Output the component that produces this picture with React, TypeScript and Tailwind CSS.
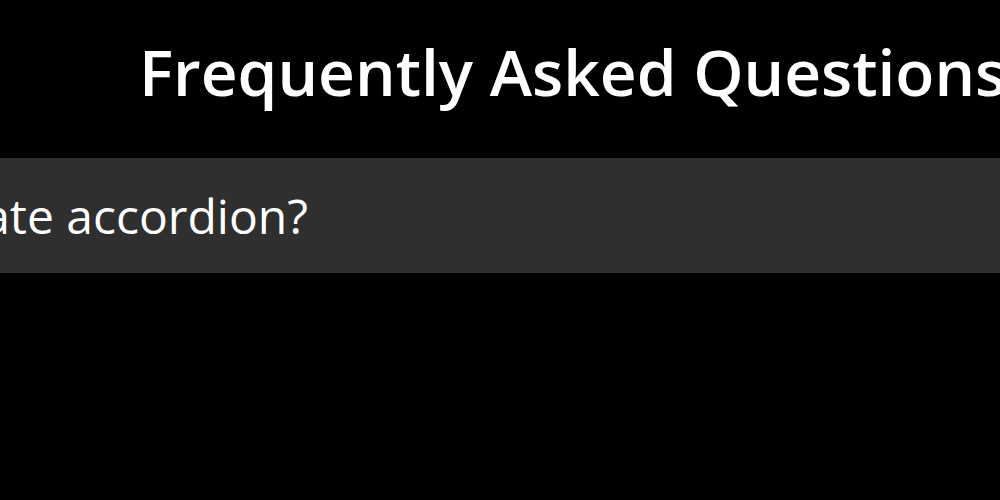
export default function App() {
  return (
    <div
      className="w-[1000px] h-[500px] overflow-hidden bg-black text-white"
      style={{ fontFamily: '"Open Sans", "Noto Sans", sans-serif' }}
    >
      <h1 className="pt-[40px] pl-[139px] text-[64px] leading-none font-semibold whitespace-nowrap">
        Frequently Asked Questions
      </h1>

      {/* accordion item, header only */}
      <div className="mt-[54px] h-[115px] bg-[#2f2f2f] flex items-center">
        <div className="w-[308px] flex justify-end shrink-0">
          <span className="text-[48px] leading-none whitespace-nowrap">How to create accordion?</span>
        </div>
      </div>
    </div>
  );
}
